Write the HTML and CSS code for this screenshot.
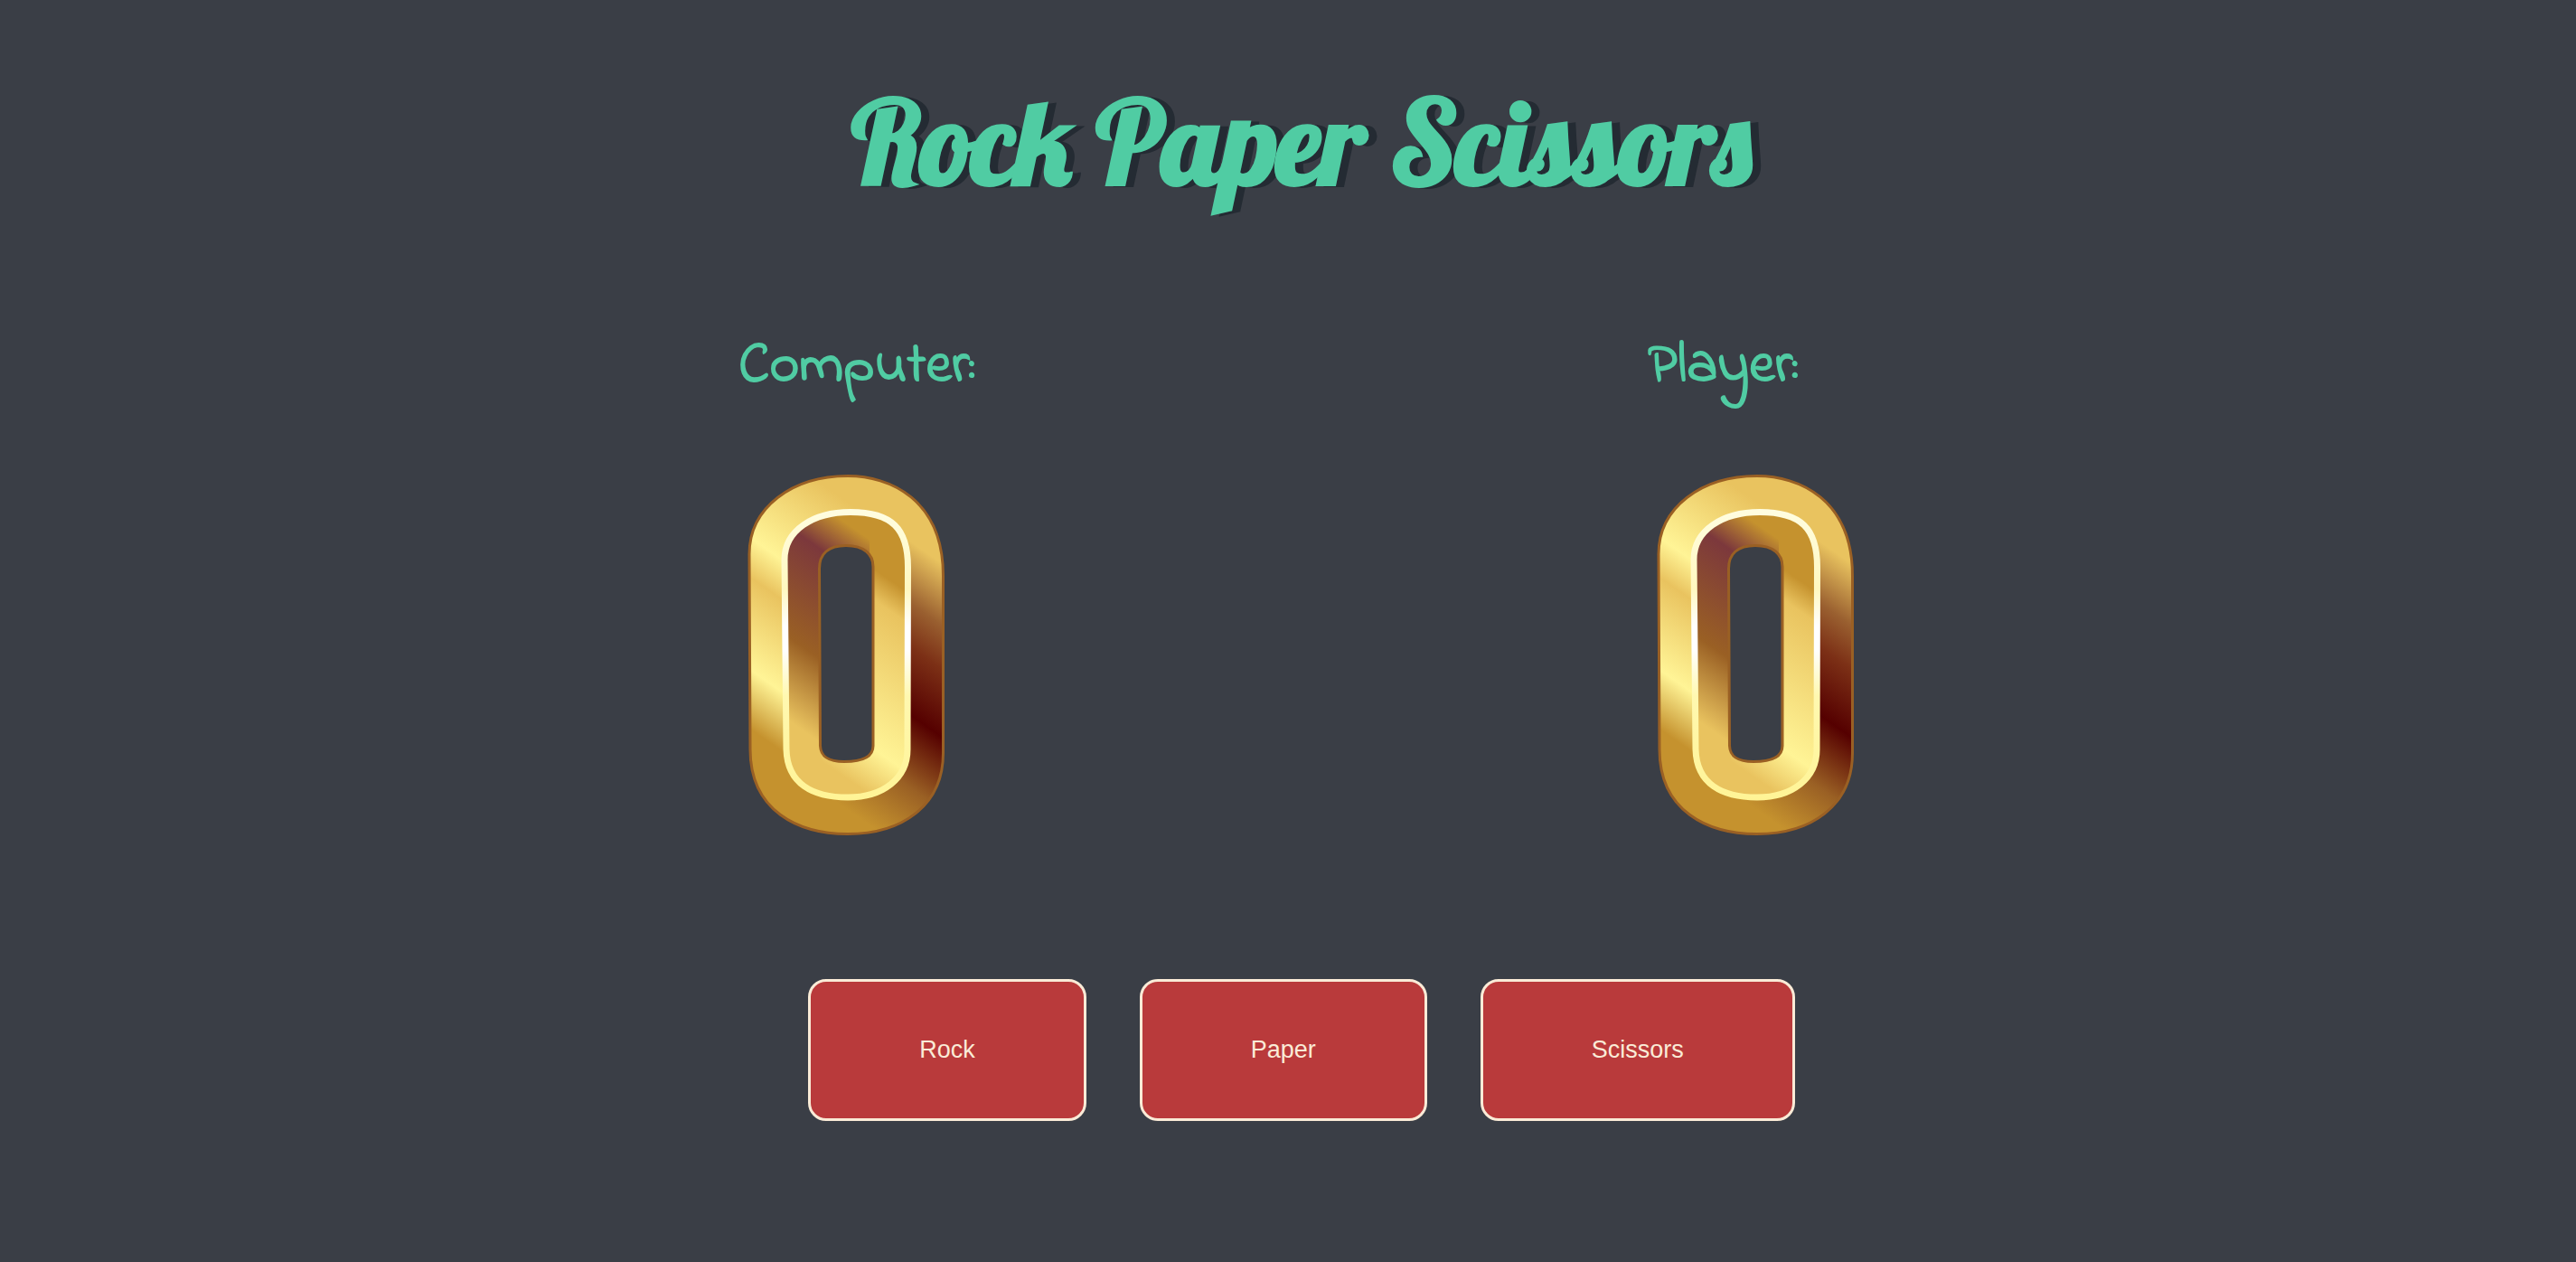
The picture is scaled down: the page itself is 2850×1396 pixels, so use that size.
FILE: index.html
```html
<!DOCTYPE html>
<html lang="en">
<head>
<meta charset="utf-8">
<meta name="viewport" content="width=device-width, initial-scale=1">
<title>Rock Paper Scissors</title>
<link rel="stylesheet" href="styles.css">
</head>
<body>
<svg class="defs" width="0" height="0" aria-hidden="true">
  <defs>
    <linearGradient id="outerLeft" gradientUnits="userSpaceOnUse" x1="57" y1="-82" x2="-171" y2="246">
      <stop offset=".14" stop-color="#e9c35f"/>
      <stop offset=".375" stop-color="#fff496"/>
      <stop offset=".465" stop-color="#e9c35f"/>
      <stop offset=".675" stop-color="#fff496"/>
      <stop offset=".81" stop-color="#c5922e"/>
    </linearGradient>
    <linearGradient id="outerRight" gradientUnits="userSpaceOnUse" x1="57" y1="-82" x2="-171" y2="246">
      <stop offset=".13" stop-color="#e9c35f"/>
      <stop offset=".27" stop-color="#9a6030"/>
      <stop offset=".37" stop-color="#7c3016"/>
      <stop offset=".525" stop-color="#550000"/>
      <stop offset=".69" stop-color="#9a6024"/>
      <stop offset=".84" stop-color="#c5922e"/>
    </linearGradient>
    <linearGradient id="innerLeft" gradientUnits="userSpaceOnUse" x1="57" y1="-82" x2="-171" y2="246">
      <stop offset=".19" stop-color="#c5922e"/>
      <stop offset=".29" stop-color="#7c383c"/>
      <stop offset=".54" stop-color="#9a6024"/>
      <stop offset=".73" stop-color="#e9c35f"/>
    </linearGradient>
    <linearGradient id="innerRight" gradientUnits="userSpaceOnUse" x1="57" y1="-82" x2="-171" y2="246">
      <stop offset=".25" stop-color="#c5922e"/>
      <stop offset=".32" stop-color="#e9c35f"/>
      <stop offset=".66" stop-color="#fff496"/>
      <stop offset=".77" stop-color="#e9c35f"/>
    </linearGradient>
    <linearGradient id="ring" gradientUnits="userSpaceOnUse" x1="0" y1="40" x2="0" y2="360">
      <stop offset="0" stop-color="#fffde0"/>
      <stop offset=".27" stop-color="#fff8c0"/>
      <stop offset=".4" stop-color="#ffffff"/>
      <stop offset=".48" stop-color="#ffffff"/>
      <stop offset=".64" stop-color="#fff8b0"/>
      <stop offset="1" stop-color="#fff496"/>
    </linearGradient>
    <clipPath id="outerSide"><path d="M135 0H240V400H100V200H135Z"/></clipPath>
    <clipPath id="innerSide"><path d="M145 0H240V400H92V200H145Z"/></clipPath>
    <path id="bevel" fill-rule="evenodd" d="M121 1.500C167 1.500 226.500 27 226.500 112V308C226.500 367 180 397.500 121 397.500C66 397.500 13 372 13 304L12 88C12 36 60 1.500 121 1.500ZM119 78.500C99 78.500 89.500 88 89.500 104L90.500 300C91 312 99 317.500 117 317.500C138 317.500 149 312 149 300V102C149 88 139 78.500 119 78.500Z"/>
    <path id="face" fill-rule="evenodd" d="M124 41.500C82 41.500 51 62 51 94L53 304C54 342 82 357 121 357C160 357 187 336 187 304L187.500 102C187.500 60 170 41.500 124 41.500ZM119 78.500C99 78.500 89.500 88 89.500 104L90.500 300C91 312 99 317.500 117 317.500C138 317.500 149 312 149 300V102C149 88 139 78.500 119 78.500Z"/>
    <path id="rim" d="M124 41.500C82 41.500 51 62 51 94L53 304C54 342 82 357 121 357C160 357 187 336 187 304L187.500 102C187.500 60 170 41.500 124 41.500Z"/>
    <symbol id="zero" viewBox="0 0 240 400">
      <use href="#bevel" fill="url(#outerLeft)"/>
      <use href="#bevel" fill="url(#outerRight)" clip-path="url(#outerSide)"/>
      <use href="#face" fill="url(#innerLeft)"/>
      <use href="#face" fill="url(#innerRight)" clip-path="url(#innerSide)"/>
      <use href="#bevel" fill="none" stroke="#9a6024" stroke-width="3"/>
      <use href="#rim" fill="none" stroke="url(#ring)" stroke-width="7"/>
    </symbol>
  </defs>
</svg>
<main class="game">
  <h1 class="title">Rock Paper Scissors</h1>
  <div class="scores">
    <section class="score">
      <h2 class="score-label">Computer:</h2>
      <svg class="digit" viewBox="0 0 240 400" role="img" aria-label="0"><use href="#zero"/></svg>
    </section>
    <section class="score">
      <h2 class="score-label">Player:</h2>
      <svg class="digit" viewBox="0 0 240 400" role="img" aria-label="0"><use href="#zero"/></svg>
    </section>
  </div>
  <div class="choices">
    <button class="choice" type="button">Rock</button>
    <button class="choice" type="button">Paper</button>
    <button class="choice" type="button">Scissors</button>
  </div>
</main>
</body>
</html>
```
FILE: styles.css
```css
* {
  box-sizing: border-box;
}

body {
  margin: 0;
  min-height: 100vh;
  background: #3a3e46;
  color: #50cca3;
}

.defs {
  position: absolute;
}

.game {
  display: flex;
  flex-direction: column;
  align-items: center;
  padding: 76px 0 80px 30px;
}

.title {
  margin: 0;
  font: bold 128px/160px Lobster, "Liberation Serif", serif;
  text-align: center;
  text-shadow: 9px 1px 0 #242b33;
}

.scores {
  display: flex;
  justify-content: space-between;
  width: 100%;
  max-width: 1246px;
  margin-top: 130px;
}

.score {
  width: 240px;
}

.score-label {
  margin: 0;
  font: bold 63px/80px "Indie Flower", Lato, sans-serif;
  white-space: nowrap;
}

.digit {
  display: block;
  width: 240px;
  height: 400px;
  margin-top: 79px;
}

.choices {
  display: flex;
  flex-wrap: wrap;
  justify-content: center;
  gap: 59px;
  margin-top: 158px;
}

.choice {
  padding: 60px 120px;
  border: 3px solid #faebd7;
  border-radius: 20px;
  background: #b93a3b;
  color: #faebd7;
  font: 27px/31px "Liberation Sans", Arial, sans-serif;
  cursor: pointer;
}
```
